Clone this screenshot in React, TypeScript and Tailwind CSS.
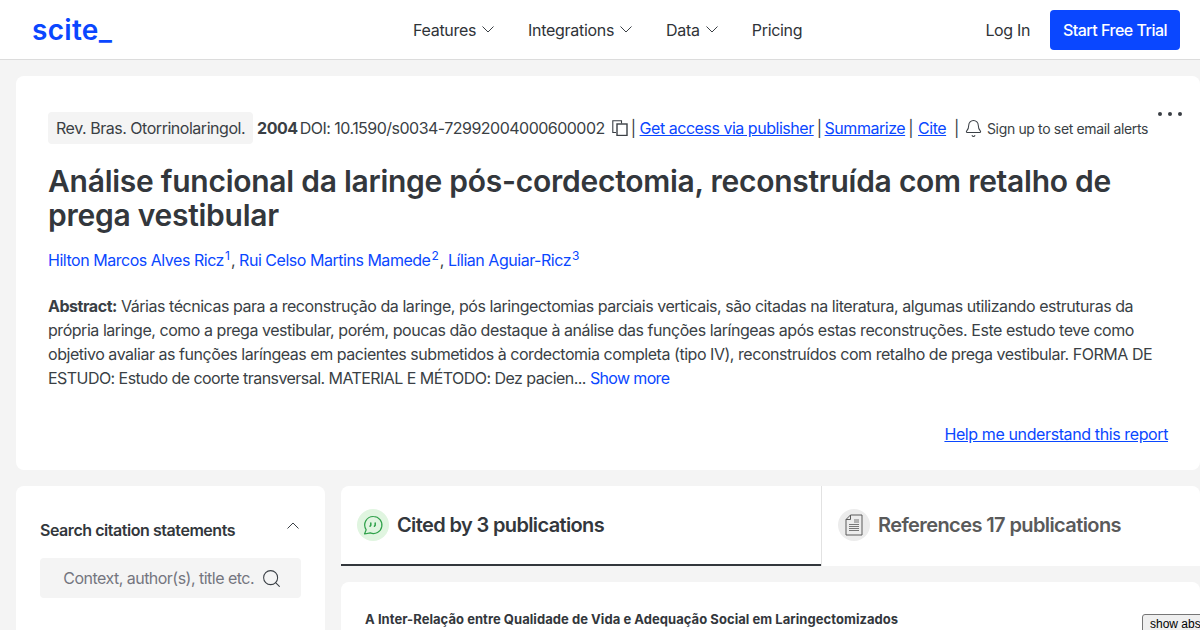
import React from 'react';
import { Search, Bell } from 'lucide-react';

const navItems = [
  { label: 'Features', caret: true },
  { label: 'Integrations', caret: true },
  { label: 'Data', caret: true },
  { label: 'Pricing', caret: false },
];

const authors = [
  { name: 'Hilton Marcos Alves Ricz', sup: '1' },
  { name: 'Rui Celso Martins Mamede', sup: '2' },
  { name: 'Lílian Aguiar-Ricz', sup: '3' },
];

const Caret = ({ up = false }: { up?: boolean }) => (
  <svg width="12" height="7" viewBox="0 0 12 7" fill="none" stroke="#3a3f45" strokeWidth="1" className="shrink-0">
    <path d={up ? 'M0.500 6.500L6 1l5.500 5.500' : 'M0.500 0.500L6 6l5.500-5.500'} />
  </svg>
);

const Header = () => (
  <header className="h-[60px] bg-white border-b border-[#dcdcdc] flex items-center pl-8 pr-5">
    <div className="w-[381px] text-[#0a47ff] text-[28px] font-semibold leading-none tracking-[0.3px]">scite_</div>
    <nav className="flex items-center gap-[34px] text-[16px] text-[#2f3338] tracking-[-0.3px]">
      {navItems.map((item) => (
        <div key={item.label} className="flex items-center gap-[6px]">
          <span>{item.label}</span>
          {item.caret && <Caret />}
        </div>
      ))}
    </nav>
    <div className="ml-auto flex items-center gap-5">
      <span className="text-[16px] text-[#2f3338] tracking-[-0.35px]">Log In</span>
      <button className="h-10 w-[130px] rounded bg-[#0a47ff] text-white text-[16px] font-medium tracking-[-0.5px]">
        Start Free Trial
      </button>
    </div>
  </header>
);

const CopyIcon = () => (
  <svg width="16" height="16" viewBox="0 0 16 16" fill="none" stroke="#3a3f45" strokeWidth="1.100" className="shrink-0">
    <path d="M4 12.500H0.800V0.800H9.500V3.500" />
    <rect x="5" y="4" width="10" height="11.500" strokeWidth="1.400" />
  </svg>
);

const QuoteIcon = () => (
  <svg width="22" height="22" viewBox="0 0 22 22" fill="none" stroke="#2fa14a" strokeWidth="1.200">
    <path d="M11.500 2.500a8.500 8.500 0 1 1-3.200 16.400L2.500 20l1.700-4.200A8.500 8.500 0 0 1 11.500 2.500z" strokeLinejoin="round" />
    <path d="M8.800 9v2.200l-.8 1M13.200 9v2.200l-.8 1" strokeWidth="1.500" strokeLinecap="round" />
  </svg>
);

const DocIcon = () => (
  <svg width="18" height="22" viewBox="0 0 18 22" fill="none" stroke="#5a5a5a" strokeWidth="1">
    <path d="M5.500 1H17v20H1V5.500z" />
    <path d="M5.500 1v4.500H1" />
    <path d="M9 6h5M9 8h5M4 10.500h10M4 12.500h10M4 14.500h10M4 16.500h10" stroke="#777" strokeWidth="1.200" />
  </svg>
);

export default function App() {
  return (
    <div className="w-[1200px] h-[630px] overflow-hidden bg-[#f4f4f4] font-['Inter',sans-serif]">
      <Header />
      <main className="pl-4 pt-4 flex flex-col gap-4">
        {/* Paper summary */}
        <section className="relative h-[394px] bg-white rounded-lg pt-9 pl-8 pr-8">
          <div className="absolute right-[18px] top-[36px] flex gap-[6px]">
            <span className="w-1 h-1 rounded-full bg-[#3a3f45]" />
            <span className="w-1 h-1 rounded-full bg-[#3a3f45]" />
            <span className="w-1 h-1 rounded-full bg-[#3a3f45]" />
          </div>
          <div className="flex items-center h-8 text-[16px] text-[#3a3f45] tracking-[-0.47px] whitespace-nowrap">
            <span className="h-8 flex items-center px-2 rounded bg-[#f4f4f4]">Rev. Bras. Otorrinolaringol.</span>
            <span className="font-bold ml-1">2004</span>
            <span className="ml-[2px] tracking-[-0.52px]">DOI: 10.1590/s0034-72992004000600002</span>
            <span className="ml-[7px]"><CopyIcon /></span>
            <span className="ml-[3px]">|</span>
            <a className="ml-1 text-[#0a47ff] underline">Get access via publisher</a>
            <span className="ml-[3px]">|</span>
            <a className="ml-[3px] text-[#0a47ff] underline">Summarize</a>
            <span className="ml-[3px]">|</span>
            <a className="ml-[5px] text-[#0a47ff] underline">Cite</a>
            <span className="ml-2">|</span>
            <Bell size={19} strokeWidth={1.300} className="ml-[5px] shrink-0" />
            <span className="ml-1 text-[14px] tracking-[-0.35px]">Sign up to set email alerts</span>
          </div>
          <h1 className="mt-[20px] text-[30px] leading-[34px] font-semibold text-[#33373c] tracking-[-0.26px]">
            Análise funcional da laringe pós-cordectomia, reconstruída com retalho de prega vestibular
          </h1>
          <div className="mt-[16px] text-[16px] leading-6 text-[#0a47ff] tracking-[-0.47px]">
            {authors.map((a, i) => (
              <React.Fragment key={a.name}>
                <span>{a.name}</span>
                <sup className="text-[12px] ml-px mr-[1.500px]">{a.sup}</sup>
                {i < authors.length - 1 && <span className="text-[#3a3f45]">, </span>}
              </React.Fragment>
            ))}
          </div>
          <p className="mt-[22px] text-[16px] leading-6 text-[#3a3f45] tracking-[-0.46px]">
            <strong className="font-bold">Abstract:</strong> Várias técnicas para a reconstrução da laringe, pós laringectomias parciais verticais, são citadas na literatura, algumas utilizando estruturas da própria laringe, como a prega vestibular, porém, poucas dão destaque à análise das funções laríngeas após estas reconstruções. Este estudo teve como objetivo avaliar as funções laríngeas em pacientes submetidos à cordectomia completa (tipo IV), reconstruídos com retalho de prega vestibular. FORMA DE <span className="tracking-[-0.55px]">ESTUDO: Estudo de coorte transversal. MATERIAL E MÉTODO: Dez pacien...</span> <span className="text-[#0a47ff] tracking-[-0.65px]">Show more</span>
          </p>
          <div className="mt-[32px] text-right text-[16px] leading-6 text-[#0a47ff] underline tracking-[-0.39px]">
            Help me understand this report
          </div>
        </section>

        <div className="flex gap-4 items-start">
          {/* Sidebar */}
          <aside className="w-[309px] h-[200px] shrink-0 bg-white rounded-lg pt-[33px] px-6">
            <div className="flex items-start justify-between pr-0.5">
              <span className="text-[16px] leading-[22px] font-semibold text-[#33373c] tracking-[-0.45px]">Search citation statements</span>
              <span className="pt-[3px]"><Caret up /></span>
            </div>
            <div className="mt-[17px] h-10 rounded bg-[#f4f4f4] flex items-center justify-end pr-[19px] gap-[7px] text-[16px] text-[#74767f] tracking-[-0.52px]">
              <span>Context, author(s), title etc.</span>
              <Search size={21} strokeWidth={1.200} className="text-[#3a3f45] shrink-0" />
            </div>
          </aside>

          {/* Citations */}
          <div className="flex-1 flex flex-col gap-4">
            <div className="flex h-20 bg-white rounded-t-lg">
              <div className="w-[480px] border-b-2 border-[#33373c] flex items-center gap-2 pl-4">
                <span className="w-8 h-8 rounded-full bg-[#e0f5e0] flex items-center justify-center"><QuoteIcon /></span>
                <span className="text-[20px] font-semibold text-[#33373c] tracking-[-0.63px]">Cited by 3 publications</span>
              </div>
              <div className="flex-1 border-l border-[#e2e2e2] flex items-center gap-2 pl-4 pb-[2px]">
                <span className="w-8 h-8 rounded-full bg-[#ececec] flex items-center justify-center"><DocIcon /></span>
                <span className="text-[20px] font-semibold text-[#5a5a5a] tracking-[-0.6px]">References 17 publications</span>
              </div>
            </div>
            <div className="relative h-[100px] bg-white rounded-t-lg pl-6 pt-[28px]">
              <div className="text-[13px] leading-[18px] font-bold text-[#33373c] whitespace-nowrap tracking-[0.05px]">
                A Inter-Relação entre Qualidade de Vida e Adequação Social em Laringectomizados
              </div>
              <button className="absolute left-[801px] top-[32px] h-5 px-[7px] text-[12px] leading-none text-black bg-[#efefef] border border-[#767676] rounded-[3px] whitespace-nowrap text-left font-['Liberation_Sans',sans-serif]">
                show abstract
              </button>
            </div>
          </div>
        </div>
      </main>
    </div>
  );
}
